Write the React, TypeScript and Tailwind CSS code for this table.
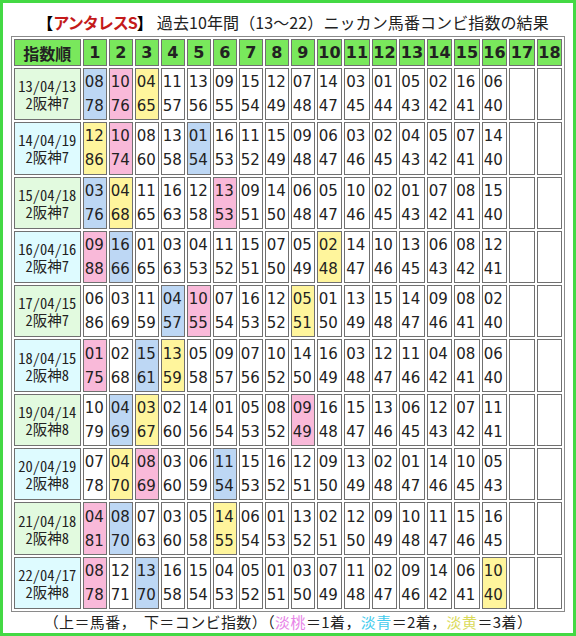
import React from "react";

type Row = {
  date: string;
  place: string;
  top: string[];
  bottom: string[];
  // column index (0-based) -> rank colour
  marks: Record<number, "p" | "b" | "y">;
};

const rows: Row[] = [
  {
    date: "13/04/13",
    place: "2阪神7",
    top: "08 10 04 11 13 09 15 12 07 14 03 01 05 02 16 06".split(" "),
    bottom: "78 76 65 57 56 55 54 49 48 47 45 44 43 42 41 40".split(" "),
    marks: { 0: "b", 1: "p", 2: "y" },
  },
  {
    date: "14/04/19",
    place: "2阪神7",
    top: "12 10 08 13 01 16 11 15 09 06 03 02 04 05 07 14".split(" "),
    bottom: "86 74 60 58 54 53 52 49 48 47 46 45 43 42 41 40".split(" "),
    marks: { 0: "y", 1: "p", 4: "b" },
  },
  {
    date: "15/04/18",
    place: "2阪神7",
    top: "03 04 11 16 12 13 09 14 06 05 10 02 01 07 08 15".split(" "),
    bottom: "76 68 65 63 58 53 51 50 48 47 46 45 43 42 41 40".split(" "),
    marks: { 0: "b", 1: "y", 5: "p" },
  },
  {
    date: "16/04/16",
    place: "2阪神7",
    top: "09 16 01 03 04 11 15 07 05 02 14 10 13 06 08 12".split(" "),
    bottom: "88 66 65 63 53 52 51 50 49 48 47 46 45 43 42 41".split(" "),
    marks: { 0: "p", 1: "b", 9: "y" },
  },
  {
    date: "17/04/15",
    place: "2阪神7",
    top: "06 03 11 04 10 07 16 12 05 01 13 15 14 09 08 02".split(" "),
    bottom: "86 69 59 57 55 54 53 52 51 50 49 48 47 46 41 40".split(" "),
    marks: { 3: "b", 4: "p", 8: "y" },
  },
  {
    date: "18/04/15",
    place: "2阪神8",
    top: "01 02 15 13 05 09 07 10 14 16 03 12 11 04 08 06".split(" "),
    bottom: "75 68 61 59 58 57 56 52 50 49 48 47 46 42 41 40".split(" "),
    marks: { 0: "p", 2: "b", 3: "y" },
  },
  {
    date: "19/04/14",
    place: "2阪神8",
    top: "10 04 03 02 14 01 05 08 09 16 15 13 06 12 07 11".split(" "),
    bottom: "79 69 67 60 56 54 53 52 49 48 47 46 45 43 42 41".split(" "),
    marks: { 1: "b", 2: "y", 8: "p" },
  },
  {
    date: "20/04/19",
    place: "2阪神8",
    top: "07 04 08 03 06 11 15 16 12 09 13 02 01 14 10 05".split(" "),
    bottom: "78 70 69 60 59 54 53 52 51 50 49 48 47 46 45 43".split(" "),
    marks: { 1: "y", 2: "p", 5: "b" },
  },
  {
    date: "21/04/18",
    place: "2阪神8",
    top: "04 08 07 03 05 14 06 01 13 02 12 09 10 11 15 16".split(" "),
    bottom: "81 70 63 60 58 55 54 53 52 51 50 49 48 47 46 45".split(" "),
    marks: { 0: "p", 1: "b", 5: "y" },
  },
  {
    date: "22/04/17",
    place: "2阪神8",
    top: "08 12 13 16 15 04 05 01 03 07 11 02 09 14 06 10".split(" "),
    bottom: "78 71 70 58 54 53 52 51 50 49 48 47 46 42 41 40".split(" "),
    marks: { 0: "p", 2: "b", 15: "y" },
  },
];

const markBg = {
  p: "bg-[#f9b9d9]",
  b: "bg-[#bdd7f4]",
  y: "bg-[#fff59c]",
};

const cols = Array.from({ length: 18 }, (_, i) => i + 1);

export default function App() {
  return (
    <div className="w-[576px] h-[636px] border-[3px] border-[#44d944] bg-white flex flex-col items-center text-[#222] font-['Noto_Sans_CJK_JP',sans-serif]">
      {/* title */}
      <div className="pt-[7px] h-[33px] pl-[10px] leading-[24px] text-[16px] tracking-[0.1px]">
        <span className="font-bold text-black">【</span>
        <span className="font-bold text-[#c41a1a] tracking-[-1px]">アンタレスS</span>
        <span className="font-bold text-black">】</span>
        <span className="ml-[4px]">過去10年間（13～22）ニッカン馬番コンビ指数の結果</span>
      </div>

      <table className="border-separate border-spacing-[2px] border border-[#8a8a8a] font-['DejaVu_Sans','Noto_Sans_CJK_JP',sans-serif]">
        <thead>
          <tr>
            <th className="w-[67px] h-[27px] p-0 border border-[#707070] bg-[#79e85c] text-[16px] font-bold font-['Noto_Sans_CJK_JP',sans-serif] leading-none">
              指数順
            </th>
            {cols.map((c) => (
              <th
                key={c}
                className={`${c < 10 ? "w-[24px]" : "w-[25.5px]"} h-[27px] p-0 border border-[#707070] bg-[#79e85c] text-[16px] font-bold leading-none`}
              >
                {c}
              </th>
            ))}
          </tr>
        </thead>
        <tbody>
          {rows.map((r, ri) => (
            <tr key={r.date}>
              <td
                className={`h-[52.3px] p-0 border border-[#707070] text-center text-[14.5px] leading-[17px] font-['Noto_Sans_Mono_CJK_JP','DejaVu_Sans_Mono','Noto_Sans_CJK_JP',monospace] ${
                  ri % 2 === 0 ? "bg-[#e2fadf]" : "bg-[#defbff]"
                }`}
              >
                <div>{r.date}</div>
                <div>{r.place}</div>
              </td>
              {cols.map((c, ci) => {
                const m = r.marks[ci];
                const has = ci < r.top.length;
                return (
                  <td
                    key={c}
                    className={`h-[52.3px] p-0 pl-[1px] border border-[#707070] text-[15px] leading-[24px] align-middle ${
                      m ? markBg[m] : "bg-white"
                    }`}
                  >
                    {has && (
                      <>
                        <div>{r.top[ci]}</div>
                        <div>{r.bottom[ci]}</div>
                      </>
                    )}
                  </td>
                );
              })}
            </tr>
          ))}
        </tbody>
      </table>

      {/* footer note */}
      <div className="mt-[1px] leading-[18px] text-[15px] tracking-[0.4px] text-[#222]">
        （上＝馬番，　下＝コンビ指数）（
        <span className="text-[#e884e8]">淡桃</span>＝1着，
        <span className="text-[#44ccee]">淡青</span>＝2着，
        <span className="text-[#dada5a]">淡黄</span>＝3着）
      </div>
    </div>
  );
}
